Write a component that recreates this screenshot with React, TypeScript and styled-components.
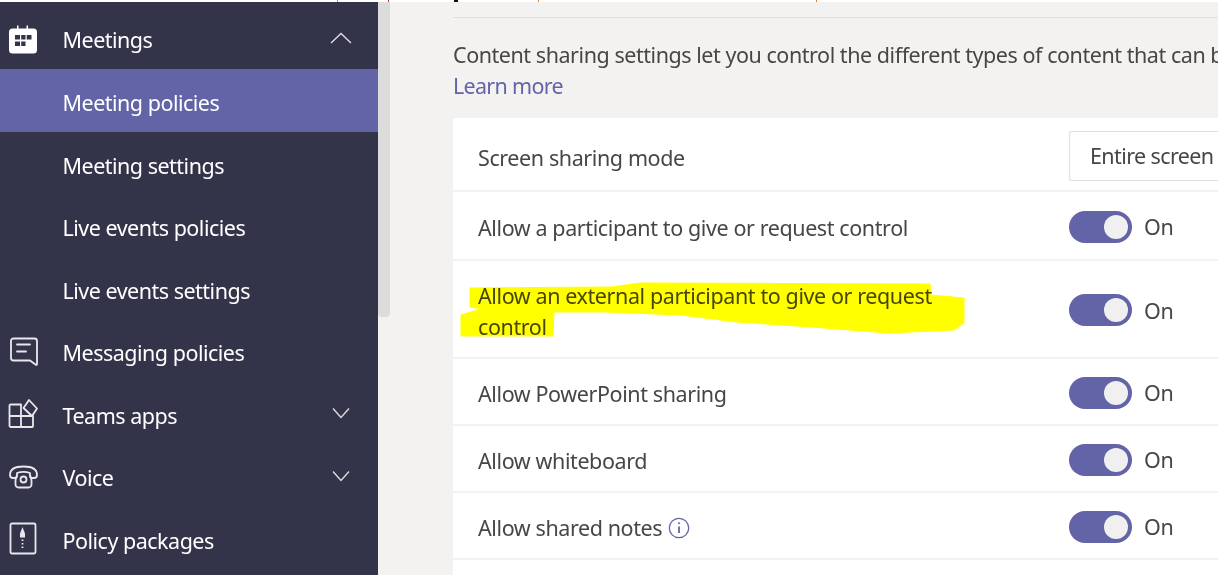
import React from 'react';
import styled, { createGlobalStyle } from 'styled-components';

const GlobalStyle = createGlobalStyle`
  html, body {
    margin: 0;
    padding: 0;
    background: #fff;
  }
  body {
    font-family: 'Noto Sans', 'Open Sans', 'Liberation Sans', sans-serif;
  }
`;

const CalendarIcon = () => (
  <svg width="30" height="32" viewBox="0 0 30 32">
    <path
      fill="#fff"
      fillRule="evenodd"
      d="M9 3.5h1.500v3h8v-3H20v3h5.500a3.500 3.500 0 0 1 3.500 3.500v18a3.500 3.500 0 0 1-3.500 3.500h-21A3.500 3.500 0 0 1 1 28V10a3.500 3.500 0 0 1 3.500-3.500H9zM7 13v4.500h5V13zm6.200 0v4.500h4.300V13zm5.500 0v4.500h4.800V13zM7 19.500V24h5v-4.500zm6.200 0V24h4.300v-4.500z"
    />
  </svg>
);

const MessageIcon = () => (
  <svg width="30" height="30" viewBox="0 0 30 30" fill="none" stroke="#e8e8ec" strokeWidth="1.800" strokeLinecap="round" strokeLinejoin="round">
    <path d="M5.500 2.500H26.500A2.500 2.500 0 0 1 29 5V28Q29 29.500 27.500 28.500L22 24.500H5.500A2.500 2.500 0 0 1 3 22V5A2.500 2.500 0 0 1 5.500 2.500Z" />
    <path d="M9 8.500h13M9 15.500h9" />
  </svg>
);

const AppsIcon = () => (
  <svg width="30" height="30" viewBox="0 0 30 30" fill="none" stroke="#e8e8ec" strokeWidth="1.800" strokeLinejoin="round">
    <path d="M2.500 6.500H13V29H2.500A1.500 1.500 0 0 1 1.500 28V7.500A1 1 0 0 1 2.500 6.500Z" />
    <path d="M1.500 18H25V28A1 1 0 0 1 24 29H13" />
    <path d="M21 2L29 10.500L24 18L15.500 10Z" />
  </svg>
);

const PhoneIcon = () => (
  <svg width="30" height="30" viewBox="0 0 30 30" fill="none" stroke="#e8e8ec" strokeWidth="1.800" strokeLinejoin="round">
    <path d="M2 14C2 8 8 5.500 15.500 5.500S29 8 29 14C29 16 28 17 26 17H24C22.500 17 22 16 22 14.500V12C18 10.500 13 10.500 9 12V14.500C9 16 8.500 17 7 17H5C3 17 2 16 2 14Z" />
    <path d="M9 14L7.500 19V23.500A3 3 0 0 0 10.500 26.500H20.500A3 3 0 0 0 23.500 23.500V19L22 14" />
    <circle cx="15.500" cy="18.500" r="3" />
  </svg>
);

const PackageIcon = () => (
  <svg width="30" height="34" viewBox="0 0 30 34" fill="none" stroke="#e8e8ec" strokeWidth="1.800" strokeLinejoin="round">
    <rect x="2.500" y="2.500" width="25" height="30" rx="1.500" />
    <path fill="#e8e8ec" stroke="none" d="M14.500 6L17 12.500V16.500H12V12.500Z" />
    <path d="M14.500 18.500v1.500M14.500 22v1.500M14.500 25.500v1.500" />
  </svg>
);

const ChevronIcon = ({ up }: { up?: boolean }) => (
  <svg width="22" height="12" viewBox="0 0 22 12" fill="none" stroke="#dcdce2" strokeWidth="1.400">
    <path d={up ? 'M1 11L11 1.500 21 11' : 'M3 1.500l8 9 8-9'} />
  </svg>
);

const InfoIcon = () => (
  <svg width="22" height="22" viewBox="0 0 22 22" fill="none" stroke="#6264a7" strokeWidth="1.300">
    <circle cx="11" cy="11" r="9.700" />
    <path d="M11 9.500v6.500" strokeWidth="1.800" />
    <circle cx="11" cy="6.300" r="1" fill="#6264a7" stroke="none" />
  </svg>
);

const navItems = [
  { label: 'Meetings', icon: <CalendarIcon />, chevron: 'up', height: 63 },
  { label: 'Meeting policies', active: true, height: 63 },
  { label: 'Meeting settings', height: 62 },
  { label: 'Live events policies', height: 63 },
  { label: 'Live events settings', height: 62 },
  { label: 'Messaging policies', icon: <MessageIcon />, height: 63 },
  { label: 'Teams apps', icon: <AppsIcon />, chevron: 'down', height: 62 },
  { label: 'Voice', icon: <PhoneIcon />, chevron: 'down', height: 63 },
  { label: 'Policy packages', icon: <PackageIcon />, height: 62 },
];

const Toggle = () => (
  <ToggleWrap>
    <ToggleTrack>
      <ToggleKnob />
    </ToggleTrack>
    <ToggleLabel>On</ToggleLabel>
  </ToggleWrap>
);

const App = () => {
  return (
    <>
      <GlobalStyle />
      <Page>
        <TopStrip />
        <Body>
          <Sidebar>
            {navItems.map((item) => (
              <NavRow key={item.label} $active={item.active} $height={item.height}>
                <NavIcon>{item.icon}</NavIcon>
                <NavLabel>{item.label}</NavLabel>
                {item.chevron && (
                  <NavChevron>
                    <ChevronIcon up={item.chevron === 'up'} />
                  </NavChevron>
                )}
              </NavRow>
            ))}
          </Sidebar>
          <ScrollTrack>
            <ScrollThumb />
          </ScrollTrack>
          <Main>
            <Rule />
            <Intro>Content sharing settings let you control the different types of content that can be</Intro>
            <LearnMore>Learn more</LearnMore>
            <Card>
              <Row $height={74} $top={3}>
                <RowLabel>Screen sharing mode</RowLabel>
                <SelectBox>Entire screen</SelectBox>
              </Row>
              <Row $height={69}>
                <RowLabel>Allow a participant to give or request control</RowLabel>
                <Toggle />
              </Row>
              <Row $height={98}>
                <RowLabel $wrap>Allow an external participant to give or request control</RowLabel>
                <Toggle />
                <Highlight viewBox="0 0 505 55" width="505" height="55">
                  <path
                    fill="#ffff00"
                    stroke="#ffff00"
                    strokeLinejoin="round"
                    d="M10 6L152 5L180 1L470 2L471 13L504 16L504 41L494 48L428 51L352 45L277 40L221 33L145 30L94 30L93 54L1 54L1 33L21 27L10 25Z"
                  />
                </Highlight>
              </Row>
              <Row $height={67}>
                <RowLabel>Allow PowerPoint sharing</RowLabel>
                <Toggle />
              </Row>
              <Row $height={67}>
                <RowLabel>Allow whiteboard</RowLabel>
                <Toggle />
              </Row>
              <Row $height={67}>
                <RowLabel>
                  Allow shared notes
                  <InfoWrap>
                    <InfoIcon />
                  </InfoWrap>
                </RowLabel>
                <Toggle />
              </Row>
            </Card>
          </Main>
          <RightEdge />
        </Body>
      </Page>
    </>
  );
};

const Page = styled.div`
  display: flex;
  flex-direction: column;
  width: 1224px;
  height: 575px;
  overflow: hidden;
  background: #f3f2f1;
`;

// the cropped screenshot leaves a few coloured specks along its top edge
const TopStrip = styled.div`
  flex: 0 0 2px;
  background-color: #fff;
  background-image: linear-gradient(
    to right,
    transparent 337px,
    #d9822b 337px,
    #d9822b 338px,
    transparent 338px,
    transparent 388px,
    #c0392b 388px,
    #c0392b 389px,
    transparent 389px,
    transparent 454px,
    #111 454px,
    #111 458px,
    transparent 458px,
    transparent 538px,
    #d9822b 538px,
    #d9822b 539px,
    transparent 539px,
    transparent 816px,
    #d9822b 816px,
    #d9822b 817px,
    transparent 817px
  );
`;

const Body = styled.div`
  display: flex;
  flex: 1;
  min-height: 0;
`;

const Sidebar = styled.nav`
  display: flex;
  flex-direction: column;
  flex: 0 0 378px;
  padding-top: 4px;
  background: #33344a;
`;

const NavRow = styled.div<{ $active?: boolean; $height: number }>`
  display: flex;
  flex: 0 0 auto;
  align-items: center;
  height: ${(p) => p.$height}px;
  background: ${(p) => (p.$active ? '#6264a7' : 'transparent')};
  color: #fff;
`;

const NavIcon = styled.div`
  display: flex;
  align-items: center;
  justify-content: center;
  flex: 0 0 30px;
  margin-left: 8px;
  margin-right: 24.5px;
`;

const NavLabel = styled.span`
  flex: 1;
  padding-top: 4px;
  font-size: 21.5px;
  letter-spacing: -0.5px;
`;

const NavChevron = styled.div`
  display: flex;
  margin-right: 26px;
`;

const ScrollTrack = styled.div`
  flex: 0 0 13px;
  background: #f3f2f1;
`;

const ScrollThumb = styled.div`
  width: 12px;
  height: 315px;
  background: #dcdcdc;
  border-radius: 0 0 4px 4px;
`;

const Main = styled.main`
  display: flex;
  flex-direction: column;
  flex: 0 0 827px;
  padding-left: 62px;
  box-sizing: border-box;
  overflow: hidden;
`;

const Rule = styled.div`
  flex: 0 0 1px;
  margin-top: 15px;
  background: #e1dfdd;
`;

const Intro = styled.p`
  margin: 21px 0 0;
  font-size: 21.5px;
  line-height: 31px;
  letter-spacing: -0.45px;
  white-space: nowrap;
  color: #484644;
`;

const LearnMore = styled.a`
  font-size: 21.5px;
  line-height: 31px;
  letter-spacing: -0.7px;
  color: #6264a7;
`;

const Card = styled.section`
  display: flex;
  flex-direction: column;
  flex: 1;
  margin-top: 17px;
  background: #fff;
  border-radius: 3px 0 0 0;
`;

const Row = styled.div<{ $height: number; $top?: number }>`
  position: relative;
  display: flex;
  flex: 0 0 auto;
  align-items: center;
  height: ${(p) => p.$height}px;
  padding-left: 25px;
  padding-top: ${(p) => p.$top || 0}px;
  border-bottom: 2px solid #f3f2f1;
  box-sizing: border-box;
`;

const RowLabel = styled.div<{ $wrap?: boolean }>`
  display: ${(p) => (p.$wrap ? 'block' : 'flex')};
  flex: 0 0 auto;
  align-items: center;
  width: ${(p) => (p.$wrap ? '470px' : '591px')};
  margin-right: ${(p) => (p.$wrap ? '121px' : '0')};
  padding-top: 4px;
  font-size: 21.5px;
  line-height: 31px;
  letter-spacing: -0.4px;
  color: #484644;
`;

const InfoWrap = styled.span`
  display: flex;
  margin-left: 6px;
`;

const SelectBox = styled.div`
  display: flex;
  flex: 1;
  align-items: center;
  height: 50px;
  padding-left: 20px;
  border: 1px solid #e1dfdd;
  border-right: none;
  border-radius: 3px 0 0 3px;
  box-sizing: border-box;
  font-size: 21.5px;
  letter-spacing: -0.6px;
  color: #484644;
`;

const ToggleWrap = styled.div`
  display: flex;
  flex: 0 0 auto;
  align-items: center;
  gap: 12px;
  padding-top: 2px;
`;

const ToggleTrack = styled.div`
  display: flex;
  align-items: center;
  justify-content: flex-end;
  width: 63px;
  height: 32px;
  padding-right: 4px;
  border-radius: 16px;
  background: #6264a7;
  box-sizing: border-box;
`;

const ToggleKnob = styled.div`
  width: 24px;
  height: 24px;
  border-radius: 50%;
  background: #f0f0f0;
`;

const ToggleLabel = styled.span`
  font-size: 21.5px;
  letter-spacing: -0.4px;
  color: #484644;
`;

// marker stroke drawn over the row text
const Highlight = styled.svg`
  position: absolute;
  left: 7px;
  top: 21px;
  mix-blend-mode: multiply;
`;

const RightEdge = styled.div`
  flex: 0 0 6px;
  background: #fff;
`;

export default App;
